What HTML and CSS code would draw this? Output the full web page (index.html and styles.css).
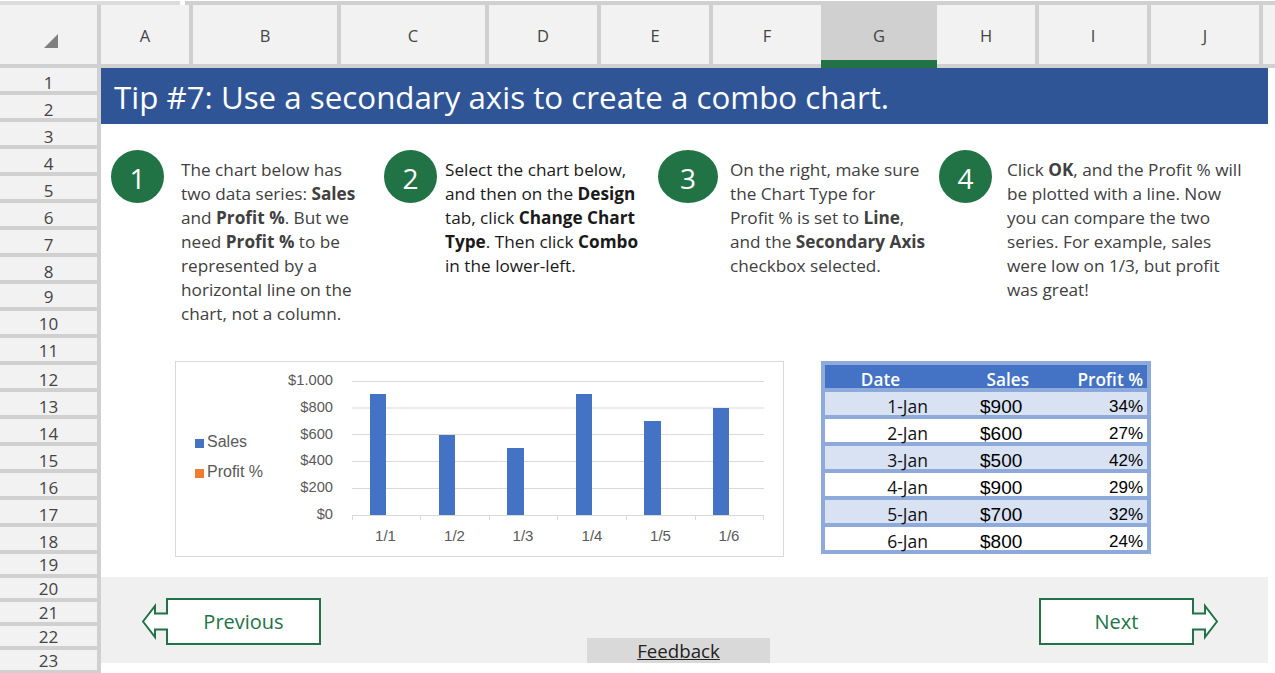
FILE: index.html
```html
<!DOCTYPE html>
<html lang="en">
<head>
<meta charset="utf-8">
<title>Tip #7</title>
<link rel="stylesheet" href="styles.css">
</head>
<body>
<div class="top-strip"><span class="strip-left"></span><span class="strip-right"></span></div>
<header class="col-header">
  <div class="corner"><svg class="corner-mark" width="14" height="14" viewBox="0 0 14 14"><polygon points="14,0 14,14 0,14" fill="#7f7f7f"/></svg></div>
  <div class="col w-a">A</div>
  <div class="col w-b">B</div>
  <div class="col w-b">C</div>
  <div class="col w-d">D</div>
  <div class="col w-d">E</div>
  <div class="col w-d">F</div>
  <div class="col col-selected">G</div>
  <div class="col w-h">H</div>
  <div class="col w-d">I</div>
  <div class="col w-d">J</div>
  <div class="col w-k"></div>
</header>
<div class="body-row">
  <aside class="row-header">
    <div class="row">1</div><div class="row">2</div><div class="row">3</div><div class="row">4</div>
    <div class="row">5</div><div class="row">6</div><div class="row">7</div><div class="row">8</div>
    <div class="row row-up">9</div><div class="row row-up">10</div><div class="row row-up">11</div><div class="row">12</div>
    <div class="row">13</div><div class="row">14</div><div class="row">15</div><div class="row">16</div>
    <div class="row">17</div><div class="row">18</div>
    <div class="row row-short">19</div><div class="row row-short">20</div><div class="row row-short">21</div>
    <div class="row row-short">22</div><div class="row row-short">23</div>
  </aside>
  <main class="sheet">
    <h1 class="title">Tip #7: Use a secondary axis to create a combo chart.</h1>
    <section class="steps">
      <div class="step step-1">
        <div class="badge">1</div>
        <p class="step-text">The chart below has<br>two data series: <b>Sales</b><br>and <b>Profit %</b>. But we<br>need <b>Profit %</b> to be<br>represented by a<br>horizontal line on the<br>chart, not a column.</p>
      </div>
      <div class="step step-2">
        <div class="badge">2</div>
        <p class="step-text step-text-dark">Select the chart below,<br>and then on the <b>Design</b><br>tab, click <b>Change Chart</b><br><b>Type</b>. Then click <b>Combo</b><br>in the lower-left.</p>
      </div>
      <div class="step step-3">
        <div class="badge badge-wide">3</div>
        <p class="step-text">On the right, make sure<br>the Chart Type for<br>Profit % is set to <b>Line</b>,<br>and the <b>Secondary Axis</b><br>checkbox selected.</p>
      </div>
      <div class="step step-4">
        <div class="badge">4</div>
        <p class="step-text">Click <b>OK</b>, and the Profit % will<br>be plotted with a line. Now<br>you can compare the two<br>series. For example, sales<br>were low on 1/3, but profit<br>was great!</p>
      </div>
    </section>
    <section class="exhibits">
      <figure class="chart">
        <svg class="chart-svg" width="609" height="196" viewBox="175 361 609 196">
          <g class="grid">
            <line x1="352" x2="764" y1="381.5" y2="381.5"/>
            <line x1="352" x2="764" y1="408" y2="408"/>
            <line x1="352" x2="764" y1="434.5" y2="434.5"/>
            <line x1="352" x2="764" y1="461.5" y2="461.5"/>
            <line x1="352" x2="764" y1="488.5" y2="488.5"/>
            <line x1="352" x2="764" y1="515.5" y2="515.5"/>
            <line x1="352.5" x2="352.5" y1="515" y2="520"/>
            <line x1="420.5" x2="420.5" y1="515" y2="520"/>
            <line x1="489.5" x2="489.5" y1="515" y2="520"/>
            <line x1="557.5" x2="557.5" y1="515" y2="520"/>
            <line x1="626.5" x2="626.5" y1="515" y2="520"/>
            <line x1="695.5" x2="695.5" y1="515" y2="520"/>
            <line x1="763.5" x2="763.5" y1="515" y2="520"/>
          </g>
          <g class="bars">
            <rect x="370" y="394" width="16" height="121"/>
            <rect x="439" y="435" width="16" height="80"/>
            <rect x="507" y="448" width="17" height="67"/>
            <rect x="576" y="394" width="16" height="121"/>
            <rect x="644" y="421" width="17" height="94"/>
            <rect x="713" y="408" width="16" height="107"/>
          </g>
          <g class="axis-y">
            <text x="333" y="385">$1.000</text>
            <text x="333" y="412">$800</text>
            <text x="333" y="439">$600</text>
            <text x="333" y="465">$400</text>
            <text x="333" y="492">$200</text>
            <text x="333" y="519">$0</text>
          </g>
          <g class="axis-x">
            <text x="385.500" y="541">1/1</text>
            <text x="454.500" y="541">1/2</text>
            <text x="523" y="541">1/3</text>
            <text x="592" y="541">1/4</text>
            <text x="660.500" y="541">1/5</text>
            <text x="729" y="541">1/6</text>
          </g>
          <rect x="195" y="439" width="9" height="9" fill="#4472c4"/>
          <text class="legend" x="207" y="447">Sales</text>
          <rect x="195" y="469" width="9" height="9" fill="#ed7d31"/>
          <text class="legend" x="207" y="477">Profit %</text>
        </svg>
      </figure>
      <div class="table">
        <div class="tr tr-head"><span class="c-date-head">Date</span><span class="c-sales-head">Sales</span><span class="c-pct">Profit %</span></div>
        <div class="tr tr-odd"><span class="c-date">1-Jan</span><span class="c-sales">$900</span><span class="c-pct">34%</span></div>
        <div class="tr"><span class="c-date">2-Jan</span><span class="c-sales">$600</span><span class="c-pct">27%</span></div>
        <div class="tr tr-odd"><span class="c-date">3-Jan</span><span class="c-sales">$500</span><span class="c-pct">42%</span></div>
        <div class="tr"><span class="c-date">4-Jan</span><span class="c-sales">$900</span><span class="c-pct">29%</span></div>
        <div class="tr tr-odd"><span class="c-date">5-Jan</span><span class="c-sales">$700</span><span class="c-pct">32%</span></div>
        <div class="tr"><span class="c-date">6-Jan</span><span class="c-sales">$800</span><span class="c-pct">24%</span></div>
      </div>
    </section>
    <footer class="nav">
      <a class="nav-btn nav-prev">
        <svg class="nav-shape" width="180" height="50" viewBox="0 0 180 50"><path d="M25 2H178V47H25V32.500H13V40L1 24.500L13 9V16.500H25Z"/></svg>
        <span class="nav-label">Previous</span>
      </a>
      <a class="feedback">Feedback</a>
      <a class="nav-btn nav-next">
        <svg class="nav-shape" width="180" height="50" viewBox="0 0 180 50"><path d="M2 2H155V16.500H167V9L179 24.500L167 40V32.500H155V47H2Z"/></svg>
        <span class="nav-label">Next</span>
      </a>
    </footer>
  </main>
</div>
</body>
</html>
```
FILE: styles.css
```css
* { box-sizing: border-box; }
html, body { margin: 0; padding: 0; height: 673px; overflow: hidden; background: #fff; }
body { font-family: "Open Sans", "Noto Sans", sans-serif; color: #404040; }

.top-strip { display: flex; gap: 5px; height: 5px; padding-top: 1px; background: #fff; }
.strip-left { width: 180px; background: #dcdcdc; }
.strip-right { flex: 1; background: #d0d0d0; }

.col-header { display: flex; gap: 4px; height: 63px; background: #d0d0d0; align-items: flex-start; }
.corner { width: 97px; height: 59px; background: #f2f2f2; padding: 29px 0 0 44px; }
.corner-mark { display: block; }
.col { height: 59px; background: #f2f2f2; display: flex; align-items: center; justify-content: center; font-size: 16.500px; padding-top: 2px; color: #444; }
.w-a { width: 88px; }
.w-b { width: 144px; }
.w-d { width: 108px; }
.w-h { width: 98px; }
.w-k { flex: 1; }
.col-selected { width: 116px; height: 63px; margin: 0 -4px; background: #d0d0d0; border-bottom: 8px solid #217346; padding-top: 6px; }

.body-row { display: flex; height: 605px; }
.row-header { width: 101px; flex: none; display: flex; flex-direction: column; gap: 4px; background: #d0d0d0; border-right: 4px solid #d0d0d0; overflow: hidden; }
.row { flex: none; height: 23px; background: #f2f2f2; display: flex; align-items: center; justify-content: center; font-size: 17px; padding-top: 6px; color: #444; line-height: 20px; }
.row-up { padding-top: 3px; }
.row-short { height: 20px; padding-top: 2px; }

.sheet { width: 1167px; flex: none; display: flex; flex-direction: column; }
.title { margin: 0; height: 56px; background: #2f5597; color: #fff; font-size: 31.300px; font-weight: 500; line-height: 58px; padding-left: 13px; white-space: nowrap; }

.steps { display: flex; height: 237px; padding: 26px 0 0 10px; }
.step { display: flex; align-items: flex-start; flex: none; }
.step-1 { width: 273px; gap: 17px; }
.step-2 { width: 274px; gap: 8px; }
.step-3 { width: 281px; gap: 12px; }
.step-4 { gap: 15px; }
.badge { flex: none; width: 53px; height: 53px; padding-top: 3px; border-radius: 50%; background: #217346; color: #fff; font-size: 28px; font-weight: 500; display: flex; align-items: center; justify-content: center; }
.badge-wide { width: 60px; }
.step-text { margin: 8px 0 0; font-size: 17.200px; line-height: 24px; white-space: nowrap; color: #404040; }
.step-text-dark { color: #1a1a1a; }

.exhibits { display: flex; align-items: flex-start; gap: 37px; height: 216px; padding-left: 74px; }
.chart { margin: 0; width: 609px; height: 196px; border: 1px solid #d9d9d9; background: #fff; overflow: hidden; }
.chart-svg { display: block; margin: -1px; }
.grid line { stroke: #d9d9d9; stroke-width: 1; }
.bars rect { fill: #4472c4; }
.axis-y text, .axis-x text, .legend { font-family: "Liberation Sans", Arial, sans-serif; fill: #595959; }
.axis-y text { font-size: 14.700px; }
.axis-x text { font-size: 15px; }
.legend { font-size: 16px; }
.axis-y text { text-anchor: end; }
.axis-x text { text-anchor: middle; }

.table { width: 330px; background: #8eaadb; padding: 4px; display: flex; flex-direction: column; gap: 4px; }
.tr { height: 23px; background: #fff; display: grid; grid-template-columns: 103px 122px 93px; color: #000; font-size: 17px; line-height: 23px; padding-right: 4px; }
.tr-odd { background: #d9e2f3; }
.tr-head { background: #4472c4; color: #fff; font-weight: 600; font-size: 17.200px; }
.tr span { white-space: nowrap; position: relative; top: 3px; }
.c-date { text-align: right; color: #111; font-size: 17.500px; }
.c-date-head { text-align: center; padding-left: 8px; }
.c-sales { font-family: "Liberation Sans", Arial, sans-serif; font-size: 19px; padding-left: 52px; }
.c-sales-head { text-align: right; padding-right: 21px; }
.c-pct { text-align: right; font-family: inherit; }
.tr:not(.tr-head) .c-pct { font-family: "Liberation Sans", Arial, sans-serif; }

.nav { height: 86px; background: #f0f0f0; display: flex; justify-content: space-between; padding: 20px 50px 0 41px; }
.nav-btn { position: relative; width: 180px; height: 50px; display: flex; align-items: center; color: #217346; font-size: 20px; }
.nav-shape { position: absolute; left: 0; top: 0; }
.nav-shape path { fill: #fff; stroke: #217346; stroke-width: 2; }
.nav-label { position: relative; width: 153px; text-align: center; line-height: 46px; }
.nav-prev { justify-content: flex-end; padding-right: 2px; }
.nav-next { justify-content: flex-start; padding-left: 2px; }
.feedback { align-self: flex-end; width: 183px; height: 25px; margin-right: 3px; background: #d9d9d9; color: #222; text-align: center; font-size: 18.700px; line-height: 25px; text-decoration: underline; }
```
